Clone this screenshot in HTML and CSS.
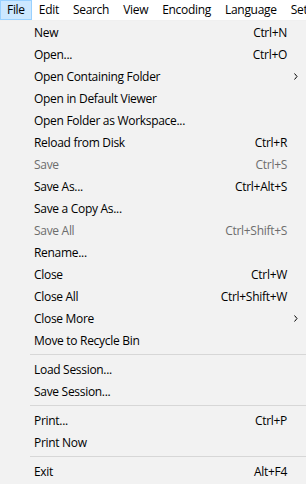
FILE: index.html
```html
<!DOCTYPE html>
<html lang="en">
<head>
  <meta charset="UTF-8" />
  <title>File menu</title>
  <link rel="stylesheet" href="styles.css">
</head>
<body>
  <div class="menubar">
    <span class="top-item active">File</span>
    <span class="top-item">Edit</span>
    <span class="top-item">Search</span>
    <span class="top-item">View</span>
    <span class="top-item">Encoding</span>
    <span class="top-item">Language</span>
    <span class="top-item">Settings</span>
  </div>

  <div class="menu">
    <div class="row"><span class="label">New</span><span class="key">Ctrl+N</span></div>
    <div class="row"><span class="label">Open...</span><span class="key">Ctrl+O</span></div>
    <div class="row"><span class="label">Open Containing Folder</span><span class="key"></span><svg class="arrow" width="4" height="7" viewBox="0 0 4 7"><path d="M0.5 0.5 L3 3.5 L0.5 6.5" fill="none" stroke="#000" stroke-width="1"/></svg></div>
    <div class="row"><span class="label">Open in Default Viewer</span><span class="key"></span></div>
    <div class="row"><span class="label">Open Folder as Workspace...</span><span class="key"></span></div>
    <div class="row"><span class="label">Reload from Disk</span><span class="key">Ctrl+R</span></div>
    <div class="row disabled"><span class="label">Save</span><span class="key">Ctrl+S</span></div>
    <div class="row"><span class="label">Save As...</span><span class="key">Ctrl+Alt+S</span></div>
    <div class="row"><span class="label">Save a Copy As...</span><span class="key"></span></div>
    <div class="row disabled"><span class="label">Save All</span><span class="key">Ctrl+Shift+S</span></div>
    <div class="row"><span class="label">Rename...</span><span class="key"></span></div>
    <div class="row"><span class="label">Close</span><span class="key">Ctrl+W</span></div>
    <div class="row"><span class="label">Close All</span><span class="key">Ctrl+Shift+W</span></div>
    <div class="row"><span class="label">Close More</span><span class="key"></span><svg class="arrow" width="4" height="7" viewBox="0 0 4 7"><path d="M0.5 0.5 L3 3.5 L0.5 6.5" fill="none" stroke="#000" stroke-width="1"/></svg></div>
    <div class="row"><span class="label">Move to Recycle Bin</span><span class="key"></span></div>
    <div class="sep"></div>
    <div class="row"><span class="label">Load Session...</span><span class="key"></span></div>
    <div class="row"><span class="label">Save Session...</span><span class="key"></span></div>
    <div class="sep"></div>
    <div class="row"><span class="label">Print...</span><span class="key">Ctrl+P</span></div>
    <div class="row"><span class="label">Print Now</span><span class="key"></span></div>
    <div class="sep"></div>
    <div class="row"><span class="label">Exit</span><span class="key">Alt+F4</span></div>
  </div>
</body>
</html>
```

FILE: styles.css
```css
* {
  margin: 0;
  padding: 0;
  box-sizing: border-box;
}

html, body {
  width: 100%;
  height: 100%;
  overflow: hidden;
  background: #f0f0f0;
  font-family: "Segoe UI", "Open Sans", sans-serif;
  font-size: 12px;
  letter-spacing: -0.3px;
  color: #000;
}

.menubar {
  display: flex;
  height: 21px;
  background: #fff;
  border-bottom: 1px solid #f0f0f0;
  white-space: nowrap;
  overflow: hidden;
}

.top-item {
  display: flex;
  align-items: center;
  padding: 0 6px 1px 6px;
  height: 20px;
  border: 1px solid transparent;
}

.top-item.active {
  background: #cce8ff;
  border-color: #99d1ff;
}

.menu {
  display: flex;
  flex-direction: column;
  background: #f2f2f2;
  height: 100%;
}

.row {
  display: flex;
  align-items: center;
  height: 22px;
  padding-left: 34px;
}

.row .label {
  flex: 1;
  white-space: nowrap;
}

.row .key {
  width: 90px;
  text-align: right;
  padding-right: 19px;
  white-space: nowrap;
}

.row .arrow {
  margin-left: -12px;
  margin-right: 8px;
}

.row.disabled {
  color: #6d6d6d;
}

.sep {
  height: 1px;
  margin: 3px 0 3px 30px;
  background: #d7d7d7;
}
```
